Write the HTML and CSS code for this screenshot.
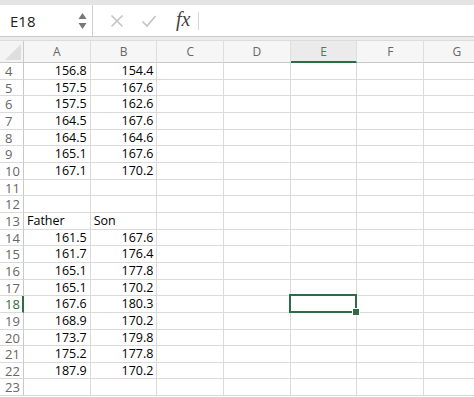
FILE: index.html
```html
<!DOCTYPE html>
<html>
<head>
    <meta charset="utf-8" />
    <title>Sheet</title>
    <link rel="stylesheet" href="styles.css">
</head>
<body>
    <div class="strip"></div>
    <div class="toolbar">
        <div class="namebox">
            <span class="name">E18</span>
            <svg class="spin" width="9" height="18" viewBox="0 0 9 18">
                <polygon points="4.5,1 8.5,7 0.5,7" fill="#777"></polygon>
                <polygon points="0.5,11 8.5,11 4.5,17" fill="#777"></polygon>
            </svg>
        </div>
        <div class="fbtns">
            <svg class="ico" width="14" height="14" viewBox="0 0 14 14">
                <path d="M1.5 1.5 L12.5 12.5 M12.5 1.5 L1.5 12.5" stroke="#c4c4c4" stroke-width="1.6" fill="none"></path>
            </svg>
            <svg class="ico" width="16" height="14" viewBox="0 0 16 14">
                <path d="M1.5 7.5 L6 12 L14.5 2" stroke="#c4c4c4" stroke-width="1.6" fill="none"></path>
            </svg>
            <span class="fx">fx</span>
        </div>
        <div class="formula"></div>
    </div>
    <div class="gap"></div>

    <div class="sheet" id="sheet"></div>

    <script>
        const cols = ['A', 'B', 'C', 'D', 'E', 'F', 'G'];
        // row number -> [A, B]
        const data = {
            4: ['156.8', '154.4'],
            5: ['157.5', '167.6'],
            6: ['157.5', '162.6'],
            7: ['164.5', '167.6'],
            8: ['164.5', '164.6'],
            9: ['165.1', '167.6'],
            10: ['167.1', '170.2'],
            13: ['Father', 'Son'],
            14: ['161.5', '167.6'],
            15: ['161.7', '176.4'],
            16: ['165.1', '177.8'],
            17: ['165.1', '170.2'],
            18: ['167.6', '180.3'],
            19: ['168.9', '170.2'],
            20: ['173.7', '179.8'],
            21: ['175.2', '177.8'],
            22: ['187.9', '170.2']
        };

        function cell(cls, text) {
            const d = document.createElement('div');
            d.className = cls;
            if (text) d.textContent = text;
            return d;
        }

        const sheet = document.getElementById('sheet');
        sheet.appendChild(cell('corner'));
        for (const c of cols) {
            sheet.appendChild(cell(c == 'E' ? 'colhead active' : 'colhead', c));
        }
        for (let r = 4; r <= 23; r++) {
            sheet.appendChild(cell(r == 18 ? 'rowhead active' : 'rowhead', String(r)));
            const vals = data[r] || [];
            for (let i = 0; i < cols.length; i++) {
                const v = vals[i] || '';
                let cls = 'cell';
                if (v && isNaN(Number(v))) cls += ' text';
                if (r == 18 && cols[i] == 'E') cls += ' selected';
                sheet.appendChild(cell(cls, v));
            }
        }
    </script>
</body>
</html>
```

FILE: styles.css
```css
body {
    margin: 0;
    background: #ffffff;
    font-family: "Open Sans", "Liberation Sans", Arial, sans-serif;
    overflow: hidden;
}

.strip {
    height: 5px;
    background: #e4e4e4;
}

.toolbar {
    display: flex;
    align-items: stretch;
    height: 31px;
    background: #ffffff;
    border-bottom: 1px solid #c9c9c9;
}

.namebox {
    width: 93px;
    display: flex;
    align-items: center;
    justify-content: space-between;
    padding: 0 5px 0 10px;
    box-sizing: border-box;
    border-right: 1px solid #cfcfcf;
}

.name {
    font-size: 15px;
    color: #222;
}

.spin {
    margin-top: 1px;
}

.fbtns {
    width: 106px;
    display: flex;
    align-items: center;
    gap: 17px;
    padding-left: 17px;
    box-sizing: border-box;
    position: relative;
}

.fbtns::after {
    content: "";
    position: absolute;
    right: 0;
    top: 7px;
    bottom: 6px;
    border-right: 1px solid #d6d6d6;
}

.fx {
    font-family: "Liberation Serif", "Times New Roman", serif;
    font-style: italic;
    font-size: 20px;
    color: #444;
    margin-left: 2px;
    margin-top: -2px;
}

.formula {
    flex: 1;
}

.gap {
    height: 3px;
    background: #ececec;
    border-bottom: 1px solid #dcdcdc;
}

.sheet {
    display: grid;
    grid-template-columns: 24px repeat(7, 66.7px);
    grid-template-rows: 22px repeat(20, 16.67px);
    font-size: 12.5px;
    color: #000;
}

.sheet > div {
    box-sizing: border-box;
    border-right: 1px solid #dadada;
    border-bottom: 1px solid #dadada;
    white-space: nowrap;
    overflow: hidden;
}

.sheet > .corner {
    background: #f4f4f4;
    border-bottom: 1px solid #c9c9c9;
    border-right: 1px solid #c9c9c9;
    position: relative;
}

.corner::after {
    content: "";
    position: absolute;
    right: 2px;
    bottom: 2px;
    border-style: solid;
    border-width: 0 0 16px 16px;
    border-color: transparent transparent #dedede transparent;
}

.sheet > .colhead {
    background: #f6f6f6;
    color: #666;
    font-size: 12px;
    text-align: center;
    line-height: 21px;
    border-bottom: 1px solid #c9c9c9;
    border-right: 1px solid #dedede;
}

.sheet > .colhead.active {
    background: #ebebeb;
    color: #4c7a5c;
    border-bottom: 2px solid #2f6b45;
}

.sheet > .rowhead {
    background: #ffffff;
    color: #666;
    font-size: 13px;
    padding-left: 5px;
    line-height: 16px;
    border-right: 1px solid #c9c9c9;
}

.sheet > .rowhead.active {
    color: #2f6b45;
    border-right: 2px solid #2f6b45;
}

.cell {
    text-align: right;
    padding-right: 3px;
    line-height: 16px;
}

.cell.text {
    text-align: left;
    padding-left: 3px;
}

.sheet > .selected {
    overflow: visible;
    position: relative;
}

.selected::before {
    content: "";
    position: absolute;
    left: -2px;
    top: -2px;
    right: -1px;
    bottom: -1px;
    border: 2px solid #2f6b45;
}

.selected::after {
    content: "";
    position: absolute;
    right: -4px;
    bottom: -4px;
    width: 6px;
    height: 6px;
    background: #2f6b45;
    border: 1px solid #ffffff;
    z-index: 1;
}
```
